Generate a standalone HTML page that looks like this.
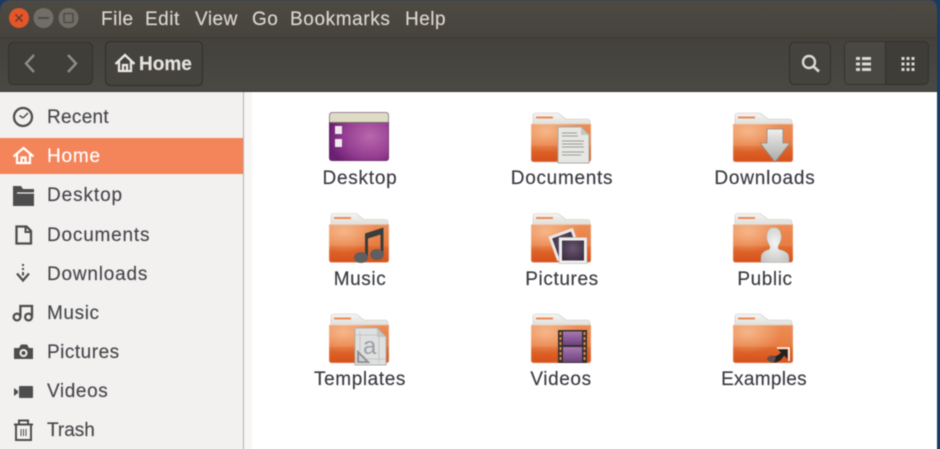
<!DOCTYPE html>
<html>
<head>
<meta charset="utf-8">
<style>
html,body{margin:0;padding:0;width:940px;height:449px;overflow:hidden;background:#fff}
#c{position:absolute;left:0;top:0;width:940px;height:449px;overflow:hidden;contain:paint}
#o{position:absolute;left:-10px;top:-10px;width:960px;height:469px;overflow:hidden;filter:blur(.5px)}
#w{position:absolute;left:10px;top:10px;width:940px;height:449px;font-family:"Liberation Sans",sans-serif;font-size:19px;letter-spacing:.7px;-webkit-text-stroke:.15px currentColor}
#w svg.bg{position:absolute;left:0;top:0;overflow:visible}
.t{position:absolute;line-height:20px;white-space:nowrap}
.m{color:#dcd8cd}
.s{left:47px;color:#47474b}
.l{color:#383a40;width:160px;text-align:center}
</style>
</head>
<body>
<div id="c">
<div id="o">
<div id="w">
<svg class="bg" width="940" height="449" viewBox="0 0 940 449" xmlns="http://www.w3.org/2000/svg">
<defs>
<linearGradient id="tb" x1="0" y1="0" x2="0" y2="1"><stop offset="0" stop-color="#4d4a44"/><stop offset="1" stop-color="#47443e"/></linearGradient>
<linearGradient id="tl" x1="0" y1="0" x2="0" y2="1"><stop offset="0" stop-color="#3e3c37"/><stop offset="1" stop-color="#4b4943"/></linearGradient>
<linearGradient id="fo" x1="0" y1="0" x2="0" y2="1"><stop offset="0" stop-color="#ec8e56"/><stop offset=".55" stop-color="#e87c42"/><stop offset=".6" stop-color="#df6a2e"/><stop offset="1" stop-color="#d64f1a"/></linearGradient>
<radialGradient id="fh" cx=".25" cy=".2" r=".55"><stop offset="0" stop-color="#ffdcb8" stop-opacity=".55"/><stop offset="1" stop-color="#ffdcb8" stop-opacity="0"/></radialGradient>
<linearGradient id="fb" x1="0" y1="0" x2="0" y2="1"><stop offset="0" stop-color="#f6f5f3"/><stop offset="1" stop-color="#d8d6d2"/></linearGradient>
<radialGradient id="dp" cx=".68" cy=".5" r=".7"><stop offset="0" stop-color="#b868ac"/><stop offset=".6" stop-color="#963e92"/><stop offset="1" stop-color="#6a1f72"/></radialGradient>
<linearGradient id="ar" x1="0" y1="0" x2="0" y2="1"><stop offset="0" stop-color="#efefed"/><stop offset="1" stop-color="#a9a9a6"/></linearGradient>
<radialGradient id="ph" cx=".5" cy=".4" r=".7"><stop offset="0" stop-color="#6a5670"/><stop offset="1" stop-color="#392c40"/></radialGradient>
<radialGradient id="pe" cx=".5" cy=".45" r=".7"><stop offset="0" stop-color="#f4f4f3"/><stop offset="1" stop-color="#c2c2c0"/></radialGradient>
<linearGradient id="vp" x1="0" y1="0" x2="0" y2="1"><stop offset="0" stop-color="#a878b0"/><stop offset="1" stop-color="#6f4280"/></linearGradient>
<g id="folder">
<path d="M2,4Q2,1 5,1H27L35,7H56Q59,7 59,10V16H2Z" fill="url(#fb)" stroke="#c9c7c3" stroke-width=".6"/>
<rect x="5" y="4.500" width="17" height="2" fill="#ec8a55"/>
<path d="M0,12H60V47Q60,50 57,50H3Q0,50 0,47Z" fill="url(#fo)"/>
<path d="M0,12H60V47Q60,50 57,50H3Q0,50 0,47Z" fill="url(#fh)"/>
<rect x=".5" y="12.500" width="59" height="37" rx="2" fill="none" stroke="#fff" stroke-opacity=".15"/>
</g>
</defs>

<!-- backdrop -->
<rect x="-10" y="-10" width="960" height="469" fill="#1b3a63"/>

<!-- window chrome -->
<path d="M-10,459V92H937V459Z" fill="#fff"/>
<path d="M-10,92V12H0Q0,0 12,0H928Q937,0 937,10V92Z" fill="url(#tl)"/>
<path d="M-10,37V12H0Q0,0 12,0H928Q937,0 937,10V37Z" fill="url(#tb)"/>
<rect x="-10" y="37" width="947" height="1" fill="#3d3b36"/>
<rect x="-10" y="91" width="947" height="1" fill="#3a3834"/>

<!-- window buttons -->
<circle cx="19" cy="18" r="10" fill="#e4552a"/>
<path d="M15.500,14.500L22.500,21.500M22.500,14.500L15.500,21.500" stroke="#6a3a28" stroke-width="1.500"/>
<circle cx="43.500" cy="18" r="10" fill="#716e67"/>
<rect x="38" y="17" width="11" height="2" fill="#4d4b45"/>
<circle cx="68.500" cy="18" r="10" fill="#716e67"/>
<rect x="64" y="13.500" width="9" height="9" rx="1" fill="none" stroke="#4d4b45" stroke-width="1.600"/>

<!-- toolbar buttons -->
<rect x="8.500" y="42.500" width="84" height="42" rx="5" fill="#403e39" stroke="#33312d"/>
<path d="M34,55L26,63.500L34,72" fill="none" stroke="#8f8d86" stroke-width="2.400"/>
<path d="M68,55L76,63.500L68,72" fill="none" stroke="#8f8d86" stroke-width="2.400"/>
<rect x="105.500" y="41.500" width="97" height="44" rx="5" fill="#45433e" stroke="#302e2a"/>
<path d="M115.500,64L125,55L134.500,64M119,61V71H131V61M123,71V65H127V71" fill="none" stroke="#ece9e0" stroke-width="2.300"/>
<rect x="789.500" y="42.500" width="41" height="42" rx="5" fill="#45433e" stroke="#33312d"/>
<circle cx="809" cy="62" r="6" fill="none" stroke="#dbd8cf" stroke-width="2.400"/>
<path d="M813.500,66.500L819,71.500" stroke="#dbd8cf" stroke-width="2.800"/>
<rect x="844.500" y="41.500" width="84" height="43" rx="5" fill="#3f3d38" stroke="#33312d"/>
<path d="M849.500,42H886V84H849.500Q845,84 845,80V46Q845,42 849.500,42Z" fill="#4a4842"/>
<rect x="885" y="42" width="1" height="42" fill="#33312d"/>
<g fill="#dbd8cf">
<rect x="856" y="57" width="4" height="3"/><rect x="862" y="57" width="9" height="3"/>
<rect x="856" y="62.500" width="4" height="3"/><rect x="862" y="62.500" width="9" height="3"/>
<rect x="856" y="68" width="4" height="3"/><rect x="862" y="68" width="9" height="3"/>
<rect x="901.500" y="57" width="3" height="3"/><rect x="906.500" y="57" width="3" height="3"/><rect x="911.500" y="57" width="3" height="3"/>
<rect x="901.500" y="62.500" width="3" height="3"/><rect x="906.500" y="62.500" width="3" height="3"/><rect x="911.500" y="62.500" width="3" height="3"/>
<rect x="901.500" y="68" width="3" height="3"/><rect x="906.500" y="68" width="3" height="3"/><rect x="911.500" y="68" width="3" height="3"/>
</g>

<!-- sidebar -->
<rect x="-10" y="92" width="253" height="367" fill="#f2f1f0"/>
<rect x="243" y="92" width="1" height="367" fill="#b5b3af"/>
<rect x="244" y="92" width="8" height="367" fill="#f7f6f5"/>
<rect x="-10" y="138" width="253" height="36" fill="#f4845a"/>

<g fill="none" stroke="#4d4d4d" stroke-width="2.300">
<circle cx="23" cy="117" r="9"/>
<path d="M23,118L28,113M23,118L19.500,115.500" stroke-width="1.500"/>
<path d="M16.500,226.500H26.500L31,231V243.500H16.500Z"/>
<path d="M25.500,227V232H30" stroke-width="2"/>
<path d="M23,264v2M23,268v2M23,272v3.500" stroke-width="2"/>
<path d="M17,273.500L23,280.500L29,273.500" stroke-width="2.200"/>
<circle cx="17" cy="317" r="3.400"/><circle cx="28.500" cy="317" r="3.400"/>
<path d="M20.400,317V306H32V317"/>
<path d="M14,424.500H33M19,424V420.500H28V424" stroke-width="2"/>
<path d="M16,425V440H31V425" stroke-width="2"/>
<path d="M21,429V436M23.500,429V436M26,429V436" stroke-width="1"/>
</g>
<path d="M13.500,156.500L23.500,148L33.500,156.500M17,154V163H30V154M21.500,163V157.500H25.500V163" fill="none" stroke="#fff" stroke-width="2.200"/>
<path d="M13,186H21L23,189H34V206H13Z" fill="#4d4d4d"/>
<path d="M17,193H34" stroke="#f2f1f0" stroke-width="1.200"/>
<path d="M14,348H19L21,344.500H27L29,348H33V359H14Z" fill="#4d4d4d"/>
<circle cx="23.500" cy="353" r="4" fill="#f2f1f0"/><circle cx="23.500" cy="353" r="2" fill="#4d4d4d"/>
<rect x="19" y="386" width="14" height="12" rx="1" fill="#4d4d4d"/>
<path d="M14,388L18,391V393L14,396Z" fill="#4d4d4d"/>

<!-- Desktop icon -->
<g transform="translate(329,112)">
<rect x="0" y="0" width="60" height="49" rx="3" fill="url(#dp)"/>
<path d="M0,3Q0,0 3,0H57Q60,0 60,3V10H0Z" fill="#dfdcc6"/>
<rect x="0" y="10" width="60" height="1" fill="#7a6a60"/>
<rect x="6" y="14" width="7" height="8" fill="#f0eaf0"/>
<rect x="6" y="27" width="7" height="8" fill="#f0eaf0"/>
<rect x=".5" y=".5" width="59" height="48" rx="3" fill="none" stroke="#5b2a62" stroke-opacity=".5"/>
</g>

<!-- Documents -->
<g transform="translate(531,112)">
<use href="#folder"/>
<path d="M27,15H50L58,23V51H27Z" fill="#e6e6e3" stroke="#aaa9a5"/>
<path d="M50,15V23H58Z" fill="#c6c6c2"/>
<path d="M31,21H46M31,24H47M31,29H53M31,32H52M31,35H53M31,40H53M31,43H50" stroke="#9a9a97" stroke-width="1"/>
</g>

<!-- Downloads -->
<g transform="translate(733,112)">
<use href="#folder"/>
<path d="M34,17H50V31H57L42,50L27,31H34Z" fill="url(#ar)" stroke="#8a8a87" stroke-width=".8"/>
</g>

<!-- Music -->
<g transform="translate(329,212.500)">
<use href="#folder"/>
<path d="M36,21L54.500,15V43H51.500V22L39,26V46H36Z" fill="#3c3c3c"/>
<ellipse cx="32" cy="45" rx="7" ry="5.500" fill="#5f5f5f"/>
<ellipse cx="48" cy="42" rx="7" ry="5.500" fill="#5f5f5f"/>
</g>

<!-- Pictures -->
<g transform="translate(531,212.500)">
<use href="#folder"/>
<g transform="rotate(-20 34 32)">
<rect x="21" y="19" width="26" height="26" fill="#e8e8e6"/>
<rect x="24" y="22" width="20" height="20" fill="url(#ph)"/>
</g>
<rect x="28" y="25" width="28" height="26" fill="#f0f0ee" stroke="#b5b5b2" stroke-width=".6"/>
<rect x="31" y="28" width="22" height="20" fill="url(#ph)"/>
</g>

<!-- Public -->
<g transform="translate(733,212.500)">
<use href="#folder"/>
<path d="M28,50V45Q28,39 36,37Q38,35 36,32Q33,27 34,22Q35,15 41,15Q47,15 48,22Q49,27 46,32Q44,35 46,37Q56,39 56,45V50Z" fill="url(#pe)" stroke="#b0afac" stroke-width=".5"/>
</g>

<!-- Templates -->
<g transform="translate(329,313)">
<use href="#folder"/>
<path d="M26,15H48L57,24V52H26Z" fill="#dedfde" stroke="#b0b0ae"/>
<path d="M48,15V24H57Z" fill="#c4c4c2"/>
<path d="M31,19V50M26,46H57M50,24V50M26,22H48" stroke="#bfc0c1" stroke-width=".8"/>
<text x="34" y="41" font-family="Liberation Sans,sans-serif" font-size="24" fill="#9ba0a6" style="letter-spacing:0;-webkit-text-stroke:0">a</text>
<path d="M29,39V49H39Z" fill="none" stroke="#8f9296" stroke-width="2"/>
</g>

<!-- Videos -->
<g transform="translate(531,313)">
<use href="#folder"/>
<rect x="27" y="17" width="29" height="33" fill="#34302e"/>
<rect x="32" y="18.500" width="19" height="13.500" fill="url(#vp)"/>
<rect x="32" y="34" width="19" height="15" fill="url(#vp)"/>
<g fill="#d58a4c">
<rect x="28.500" y="19" width="2" height="3"/><rect x="28.500" y="24" width="2" height="3"/><rect x="28.500" y="29" width="2" height="3"/><rect x="28.500" y="34" width="2" height="3"/><rect x="28.500" y="39" width="2" height="3"/><rect x="28.500" y="44" width="2" height="3"/>
<rect x="52.500" y="19" width="2" height="3"/><rect x="52.500" y="24" width="2" height="3"/><rect x="52.500" y="29" width="2" height="3"/><rect x="52.500" y="34" width="2" height="3"/><rect x="52.500" y="39" width="2" height="3"/><rect x="52.500" y="44" width="2" height="3"/>
</g>
</g>

<!-- Examples -->
<g transform="translate(733,313)">
<use href="#folder"/>
<path d="M44,35H56V48" fill="none" stroke="#fff" stroke-width="1.600"/>
<path d="M45,36.500H54.500V46L51,42.500Q47,50 40,49.500Q36,49 34,46Q36,42 40,43Q44,44 48,39.500Z" fill="#222"/>
<path d="M34,46Q36,42 40,43L43,44Q42,49 40,49.500Q36,49 34,46Z" fill="#5e504a"/>
</g>
</svg>

<!-- menu -->
<div class="t m" style="left:101px;top:10px;letter-spacing:.5px">File</div>
<div class="t m" style="left:145px;top:10px;letter-spacing:.5px">Edit</div>
<div class="t m" style="left:195px;top:10px;letter-spacing:.5px">View</div>
<div class="t m" style="left:252px;top:10px;letter-spacing:.5px">Go</div>
<div class="t m" style="left:290px;top:10px;letter-spacing:.6px">Bookmarks</div>
<div class="t m" style="left:405px;top:10px;letter-spacing:.5px">Help</div>
<div class="t" style="left:139px;top:55px;color:#e6e3da;font-weight:bold;letter-spacing:0">Home</div>

<!-- sidebar -->
<div class="t s" style="top:108px;letter-spacing:.3px">Recent</div>
<div class="t s" style="top:147px;color:#fff;letter-spacing:.8px">Home</div>
<div class="t s" style="top:186px;letter-spacing:.9px">Desktop</div>
<div class="t s" style="top:226px;letter-spacing:.8px">Documents</div>
<div class="t s" style="top:265px;letter-spacing:.8px">Downloads</div>
<div class="t s" style="top:304px;letter-spacing:.6px">Music</div>
<div class="t s" style="top:343px;letter-spacing:.5px">Pictures</div>
<div class="t s" style="top:382px;letter-spacing:.6px">Videos</div>
<div class="t s" style="top:421px;letter-spacing:0">Trash</div>

<!-- grid labels -->
<div class="t l" style="left:280px;top:169px;letter-spacing:.75px">Desktop</div>
<div class="t l" style="left:482px;top:169px;letter-spacing:.7px">Documents</div>
<div class="t l" style="left:685px;top:169px;letter-spacing:.8px">Downloads</div>
<div class="t l" style="left:280px;top:270px;letter-spacing:.6px">Music</div>
<div class="t l" style="left:482px;top:270px;letter-spacing:.6px">Pictures</div>
<div class="t l" style="left:685px;top:270px;letter-spacing:.6px">Public</div>
<div class="t l" style="left:280px;top:370px;letter-spacing:.6px">Templates</div>
<div class="t l" style="left:481px;top:370px;letter-spacing:.6px">Videos</div>
<div class="t l" style="left:684px;top:370px;letter-spacing:.3px">Examples</div>
</div>
</div>
</div>
</body>
</html>
